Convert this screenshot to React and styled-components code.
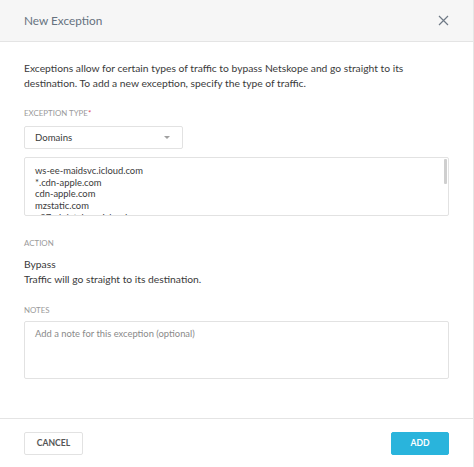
import styled, { createGlobalStyle } from 'styled-components';

const GlobalStyle = createGlobalStyle`
  html, body {
    margin: 0;
    padding: 0;
    background: #ffffff;
  }
  * {
    box-sizing: border-box;
  }
`;

const domains = [
  'ws-ee-maidsvc.icloud.com',
  '*.cdn-apple.com',
  'cdn-apple.com',
  'mzstatic.com',
  'p27-ckdatabase.icloud.com',
];

const App = () => {
  return (
    <>
      <GlobalStyle />
      <Modal>
        <Header>
          <Title>New Exception</Title>
          <CloseButton aria-label='Close'>
            <svg width='11' height='11' viewBox='0 0 11 11'>
              <path d='M1 1 L10 10 M10 1 L1 10' stroke='#6f7a86' strokeWidth='1.2' fill='none' />
            </svg>
          </CloseButton>
        </Header>
        <Body>
          <Description>
            Exceptions allow for certain types of traffic to bypass Netskope and go straight to its
            destination. To add a new exception, specify the type of traffic.
          </Description>
          <Label $top={16}>
            Exception Type<Required>*</Required>
          </Label>
          <Select>
            <span>Domains</span>
            <Caret />
          </Select>
          <DomainBox>
            {domains.map((d) => (
              <div key={d}>{d}</div>
            ))}
            <ScrollThumb />
          </DomainBox>
          <Label $top={21}>Action</Label>
          <ActionText>
            <div>Bypass</div>
            <div>Traffic will go straight to its destination.</div>
          </ActionText>
          <Label $top={17}>Notes</Label>
          <Notes placeholder='Add a note for this exception (optional)' />
        </Body>
        <Footer>
          <Button>Cancel</Button>
          <Button $primary>Add</Button>
        </Footer>
      </Modal>
    </>
  );
};

const Modal = styled.div`
  display: flex;
  flex-direction: column;
  height: 467px;
  font-family: Lato, 'Open Sans', sans-serif;
  color: #3a3a3a;
  border-right: 1px solid #e6e6e6;
`;

const Header = styled.div`
  display: flex;
  align-items: center;
  justify-content: space-between;
  height: 42px;
  padding: 0 24px;
  background: #f6f6f6;
  border-bottom: 1px solid #e4e4e4;
`;

const Title = styled.h1`
  margin: 0;
  font-size: 11.8px;
  font-weight: 400;
  color: #66727f;
`;

const CloseButton = styled.button`
  display: flex;
  align-items: center;
  padding: 0;
  border: none;
  background: none;
`;

const Body = styled.div`
  flex: 1;
  padding: 19px 24px 0 24px;
`;

const Description = styled.p`
  margin: 0;
  font-size: 10.3px;
  line-height: 15px;
  color: #3a3a3a;
`;

const Label = styled.div`
  margin-top: ${(p) => p.$top}px;
  font-size: 7.9px;
  line-height: 12px;
  text-transform: uppercase;
  color: #9a9a9a;
`;

const Required = styled.span`
  color: #e0445a;
`;

const Select = styled.div`
  display: flex;
  align-items: center;
  justify-content: space-between;
  width: 159px;
  height: 23px;
  margin-top: 7px;
  padding: 0 10px;
  border: 1px solid #e2e2e2;
  border-radius: 2px;
  font-size: 9.6px;
  color: #3a3a3a;
`;

const Caret = styled.span`
  width: 0;
  height: 0;
  margin-right: 2px;
  border-left: 3px solid transparent;
  border-right: 3px solid transparent;
  border-top: 3px solid #a0a0a0;
`;

const DomainBox = styled.div`
  position: relative;
  height: 59px;
  margin-top: 8px;
  padding: 7px 10px 0 10px;
  overflow: hidden;
  border: 1px solid #e2e2e2;
  border-radius: 2px;
  font-size: 9.4px;
  line-height: 11.7px;
  color: #3a3a3a;
`;

const ScrollThumb = styled.span`
  position: absolute;
  top: 1px;
  right: 1px;
  width: 3px;
  height: 25px;
  background: #cfcfcf;
  border-radius: 1px;
`;

const ActionText = styled.div`
  margin-top: 8px;
  font-size: 10.3px;
  line-height: 15px;
  color: #3a3a3a;
`;

const Notes = styled.textarea`
  display: block;
  width: 100%;
  height: 58px;
  margin-top: 5px;
  padding: 6px 10px;
  resize: none;
  border: 1px solid #e2e2e2;
  border-radius: 2px;
  font-family: Lato, 'Open Sans', sans-serif;
  font-size: 9.4px;
  color: #3a3a3a;

  &::placeholder {
    color: #8a8a8a;
  }
`;

const Footer = styled.div`
  display: flex;
  align-items: center;
  justify-content: space-between;
  height: 49px;
  padding: 0 24px;
  border-top: 1px solid #e4e4e4;
`;

const Button = styled.button`
  width: ${(p) => (p.$primary ? '58px' : '59px')};
  height: 23px;
  padding: 0;
  border: 1px solid ${(p) => (p.$primary ? '#29b4dc' : '#e2e2e2')};
  border-radius: 2px;
  background: ${(p) => (p.$primary ? '#29b4dc' : '#ffffff')};
  color: ${(p) => (p.$primary ? '#ffffff' : '#555')};
  font-family: Lato, 'Open Sans', sans-serif;
  font-size: 8.6px;
  font-weight: 700;
  text-transform: uppercase;
`;

export default App;
